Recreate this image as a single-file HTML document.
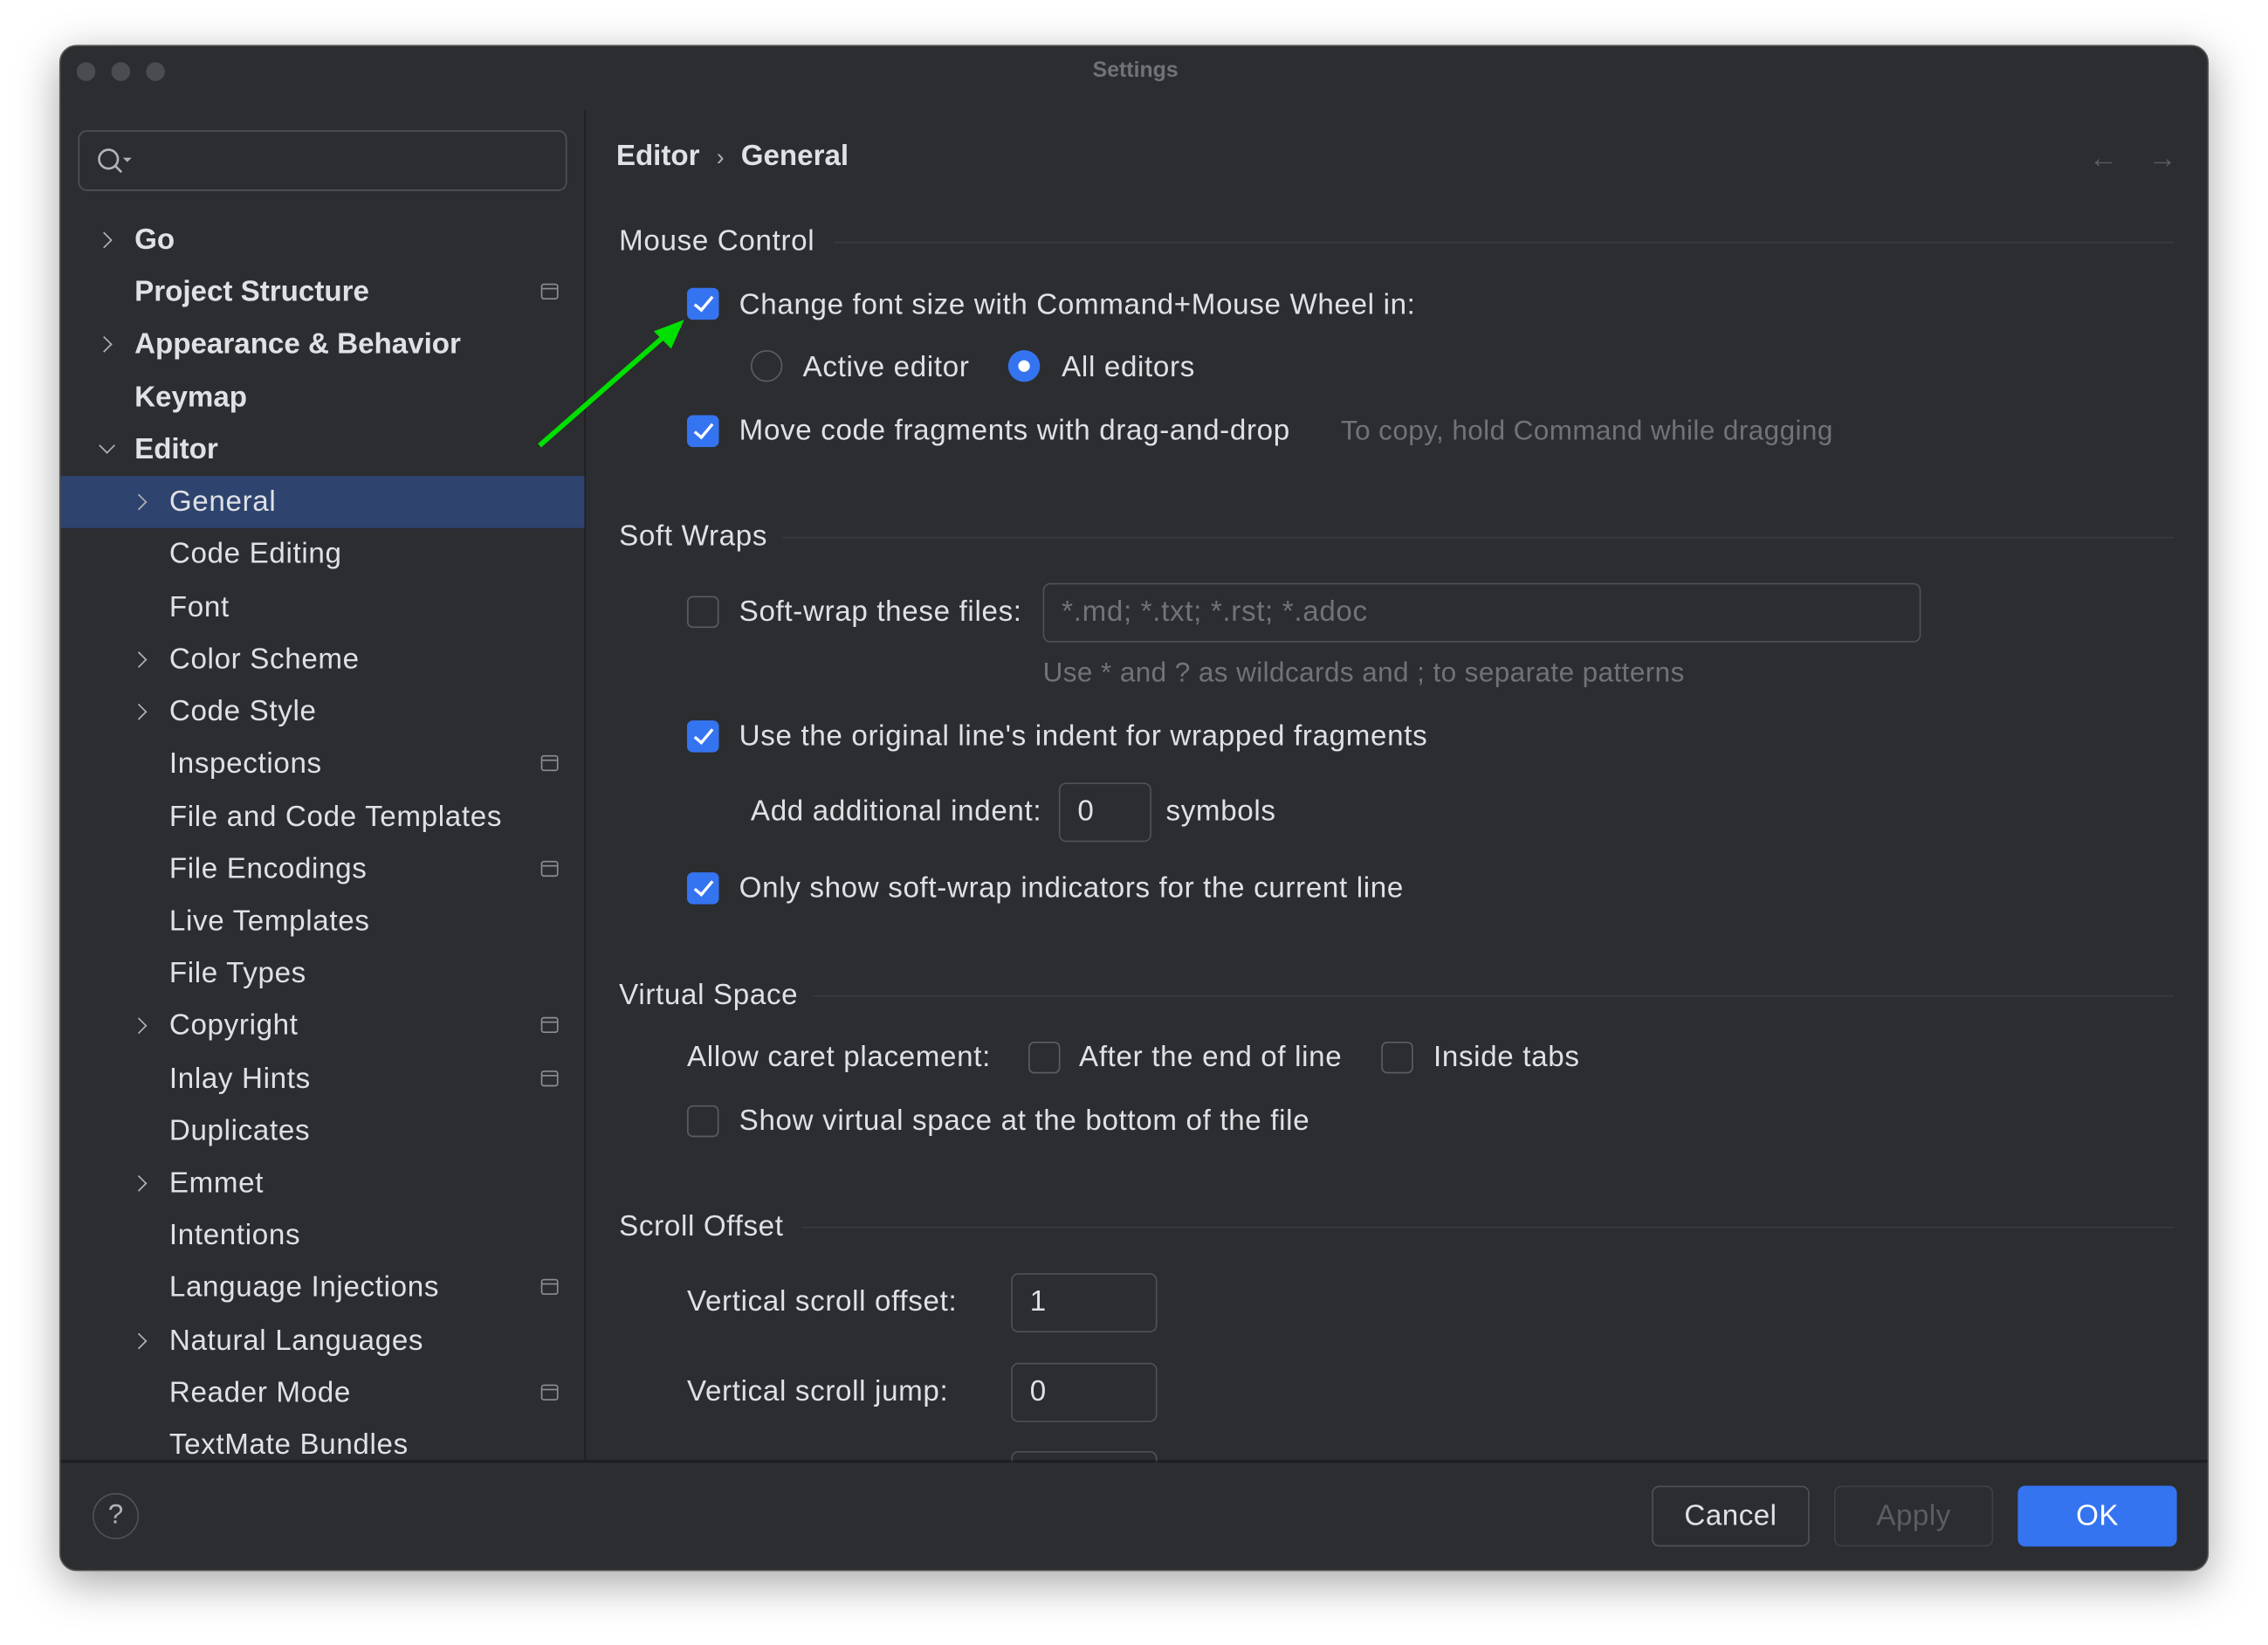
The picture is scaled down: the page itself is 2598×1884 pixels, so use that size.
<!DOCTYPE html>
<html><head><meta charset="utf-8"><style>
html,body{margin:0;padding:0;background:#fff;width:2598px;height:1884px;overflow:hidden}
#s{position:absolute;left:0;top:0;width:1568px;height:1137px;transform:scale(1.6569);transform-origin:0 0;font-family:"Liberation Sans",sans-serif;color:#dfe1e5}
.win{position:absolute;left:41px;top:31px;width:1486px;height:1055px;background:#2b2d30;border-radius:12px;box-shadow:0 8px 30px rgba(0,0,0,.35);border:1px solid #555;box-sizing:border-box;overflow:hidden}
.a{position:absolute;white-space:nowrap;line-height:24px;font-size:20px;letter-spacing:0.4px}
.b{font-weight:bold;letter-spacing:0}
.dot{position:absolute;top:11px;width:13px;height:13px;border-radius:50%;background:#4a4c50}
.chev{position:absolute;width:7px;height:7px;border-right:1.5px solid #b0b3b8;border-bottom:1.5px solid #b0b3b8}
.r{transform:rotate(-45deg)}.d{transform:rotate(45deg)}
.ic{position:absolute;width:10px;height:9px;border:1.5px solid #8c8f94;border-radius:2px}
.ic:after{content:"";position:absolute;left:0;right:0;top:2px;border-top:1.5px solid #8c8f94}
.cb{position:absolute;width:22px;height:22px;border-radius:4px;box-sizing:border-box;border:1.5px solid #5a5d63}
.cb.on{background:#3574f0;border:none}
.cb.on:after{content:"";position:absolute;left:8px;top:3px;width:5px;height:11px;border-right:2.5px solid #fff;border-bottom:2.5px solid #fff;transform:rotate(40deg)}
.inp{position:absolute;border:1.5px solid #4e5157;border-radius:5px;box-sizing:border-box}
.hdr{position:absolute;height:1px;background:#393b40}
.g{color:#6f737a}
.h{font-size:19px;letter-spacing:0.25px}
.btn{position:absolute;top:995px;height:42px;border-radius:5px;box-sizing:border-box;border:1.5px solid #4e5157;text-align:center;line-height:40px;font-size:20px;letter-spacing:0.3px}
</style></head><body><div id="s">
<div class="win">
<div class="dot" style="left:11px"></div><div class="dot" style="left:35px"></div><div class="dot" style="left:59px"></div>
<div class="a b" style="left:0;width:1486px;text-align:center;top:5px;font-size:15px;color:#6f7277">Settings</div>
<div style="position:absolute;left:362px;top:44px;width:1px;height:934px;background:#1e1f22"></div>
<div style="position:absolute;left:0;top:977px;width:1486px;height:1px;background:#1e1f22"></div>
<div class="inp" style="left:12px;top:58px;width:338px;height:42px;border-radius:6px"></div>
<svg style="position:absolute;left:24px;top:69px" width="28" height="22"><circle cx="9" cy="9" r="6.5" fill="none" stroke="#b0b3b8" stroke-width="1.6"/><line x1="13.5" y1="13.5" x2="18" y2="18" stroke="#b0b3b8" stroke-width="1.6"/><path d="M19 8h6l-3 3z" fill="#b0b3b8"/></svg>
<div style="position:absolute;left:0;top:297px;width:362px;height:36px;background:#2e436e"></div>
<div class="chev r" style="left:26px;top:130px"></div><div class="a b" style="left:51px;top:122px">Go</div>
<div class="a b" style="left:51px;top:158px">Project Structure</div><div class="ic" style="left:332px;top:164px"></div>
<div class="chev r" style="left:26px;top:202px"></div><div class="a b" style="left:51px;top:194px">Appearance &amp; Behavior</div>
<div class="a b" style="left:51px;top:231px">Keymap</div>
<div class="chev d" style="left:28px;top:272px"></div><div class="a b" style="left:51px;top:267px">Editor</div>
<div class="chev r" style="left:50px;top:311px"></div><div class="a" style="left:75px;top:303px">General</div>
<div class="a" style="left:75px;top:339px">Code Editing</div>
<div class="a" style="left:75px;top:376px">Font</div>
<div class="chev r" style="left:50px;top:420px"></div><div class="a" style="left:75px;top:412px">Color Scheme</div>
<div class="chev r" style="left:50px;top:456px"></div><div class="a" style="left:75px;top:448px">Code Style</div>
<div class="a" style="left:75px;top:484px">Inspections</div><div class="ic" style="left:332px;top:490px"></div>
<div class="a" style="left:75px;top:521px">File and Code Templates</div>
<div class="a" style="left:75px;top:557px">File Encodings</div><div class="ic" style="left:332px;top:563px"></div>
<div class="a" style="left:75px;top:593px">Live Templates</div>
<div class="a" style="left:75px;top:629px">File Types</div>
<div class="chev r" style="left:50px;top:673px"></div><div class="a" style="left:75px;top:665px">Copyright</div><div class="ic" style="left:332px;top:671px"></div>
<div class="a" style="left:75px;top:702px">Inlay Hints</div><div class="ic" style="left:332px;top:708px"></div>
<div class="a" style="left:75px;top:738px">Duplicates</div>
<div class="chev r" style="left:50px;top:782px"></div><div class="a" style="left:75px;top:774px">Emmet</div>
<div class="a" style="left:75px;top:810px">Intentions</div>
<div class="a" style="left:75px;top:846px">Language Injections</div><div class="ic" style="left:332px;top:852px"></div>
<div class="chev r" style="left:50px;top:891px"></div><div class="a" style="left:75px;top:883px">Natural Languages</div>
<div class="a" style="left:75px;top:919px">Reader Mode</div><div class="ic" style="left:332px;top:925px"></div>
<div class="a" style="left:75px;top:955px">TextMate Bundles</div>
<div class="a b" style="left:384px;top:64px">Editor <span style="font-weight:normal;color:#b0b3b8;font-size:16px;padding:0 6px">›</span> General</div>
<div class="a" style="left:1402px;top:66px;color:#5a5d63">←</div><div class="a" style="left:1443px;top:66px;color:#5a5d63">→</div>
<div class="a" style="left:386px;top:123px">Mouse Control</div><div class="hdr" style="left:535px;top:135px;width:926px"></div>
<div class="cb on" style="left:433px;top:167px"></div><div class="a" style="left:469px;top:167px">Change font size with Command+Mouse Wheel in:</div>
<div style="position:absolute;left:477px;top:210px;width:22px;height:22px;border-radius:50%;border:1.5px solid #5a5d63;box-sizing:border-box"></div>
<div class="a" style="left:513px;top:210px">Active editor</div>
<div style="position:absolute;left:655px;top:210px;width:22px;height:22px;border-radius:50%;background:#3574f0"><div style="position:absolute;left:7px;top:7px;width:8px;height:8px;border-radius:50%;background:#fff"></div></div>
<div class="a" style="left:692px;top:210px">All editors</div>
<div class="cb on" style="left:433px;top:255px"></div><div class="a" style="left:469px;top:254px">Move code fragments with drag-and-drop</div>
<div class="a g h" style="left:885px;top:255px">To copy, hold Command while dragging</div>
<div class="a" style="left:386px;top:327px">Soft Wraps</div><div class="hdr" style="left:498px;top:339px;width:963px"></div>
<div class="cb" style="left:433px;top:380px"></div><div class="a" style="left:469px;top:379px">Soft-wrap these files:</div>
<div class="inp" style="left:679px;top:371px;width:607px;height:41px"></div><div class="a g" style="left:692px;top:379px">*.md; *.txt; *.rst; *.adoc</div>
<div class="a g h" style="left:679px;top:422px">Use * and ? as wildcards and ; to separate patterns</div>
<div class="cb on" style="left:433px;top:466px"></div><div class="a" style="left:469px;top:465px">Use the original line's indent for wrapped fragments</div>
<div class="a" style="left:477px;top:517px">Add additional indent:</div>
<div class="inp" style="left:690px;top:509px;width:64px;height:41px"></div><div class="a" style="left:703px;top:517px">0</div>
<div class="a" style="left:764px;top:517px">symbols</div>
<div class="cb on" style="left:433px;top:571px"></div><div class="a" style="left:469px;top:570px">Only show soft-wrap indicators for the current line</div>
<div class="a" style="left:386px;top:644px">Virtual Space</div><div class="hdr" style="left:520px;top:656px;width:941px"></div>
<div class="a" style="left:433px;top:687px">Allow caret placement:</div>
<div class="cb" style="left:669px;top:688px"></div><div class="a" style="left:704px;top:687px">After the end of line</div>
<div class="cb" style="left:913px;top:688px"></div><div class="a" style="left:949px;top:687px">Inside tabs</div>
<div class="cb" style="left:433px;top:732px"></div><div class="a" style="left:469px;top:731px">Show virtual space at the bottom of the file</div>
<div class="a" style="left:386px;top:804px">Scroll Offset</div><div class="hdr" style="left:512px;top:816px;width:949px"></div>
<div class="a" style="left:433px;top:856px">Vertical scroll offset:</div>
<div class="inp" style="left:657px;top:848px;width:101px;height:41px"></div><div class="a" style="left:670px;top:856px">1</div>
<div class="a" style="left:433px;top:918px">Vertical scroll jump:</div>
<div class="inp" style="left:657px;top:910px;width:101px;height:41px"></div><div class="a" style="left:670px;top:918px">0</div>
<div class="inp" style="left:657px;top:971px;width:101px;height:20px;border-bottom:none"></div>
<div style="position:absolute;left:0;top:978px;width:1486px;height:77px;background:#2b2d30;border-top:1px solid #1e1f22"></div>
<div style="position:absolute;left:22px;top:1000px;width:32px;height:32px;border-radius:50%;border:1.5px solid #4e5157;box-sizing:border-box;text-align:center;line-height:30px;font-size:19px;color:#b0b3b8">?</div>
<div class="btn" style="left:1100px;width:109px">Cancel</div>
<div class="btn" style="left:1226px;width:110px;color:#5a5d63;border-color:#3e4045">Apply</div>
<div class="btn" style="left:1353px;width:110px;background:#3574f0;border:none;line-height:42px;color:#fff">OK</div>
</div>
<svg style="position:absolute;left:0;top:0" width="1568" height="1137"><line x1="373" y1="308" x2="462" y2="230" stroke="#00e000" stroke-width="3.5"/><path d="M473 221 L452 229 L464 241 Z" fill="#00e000"/></svg>
</div></body></html>
